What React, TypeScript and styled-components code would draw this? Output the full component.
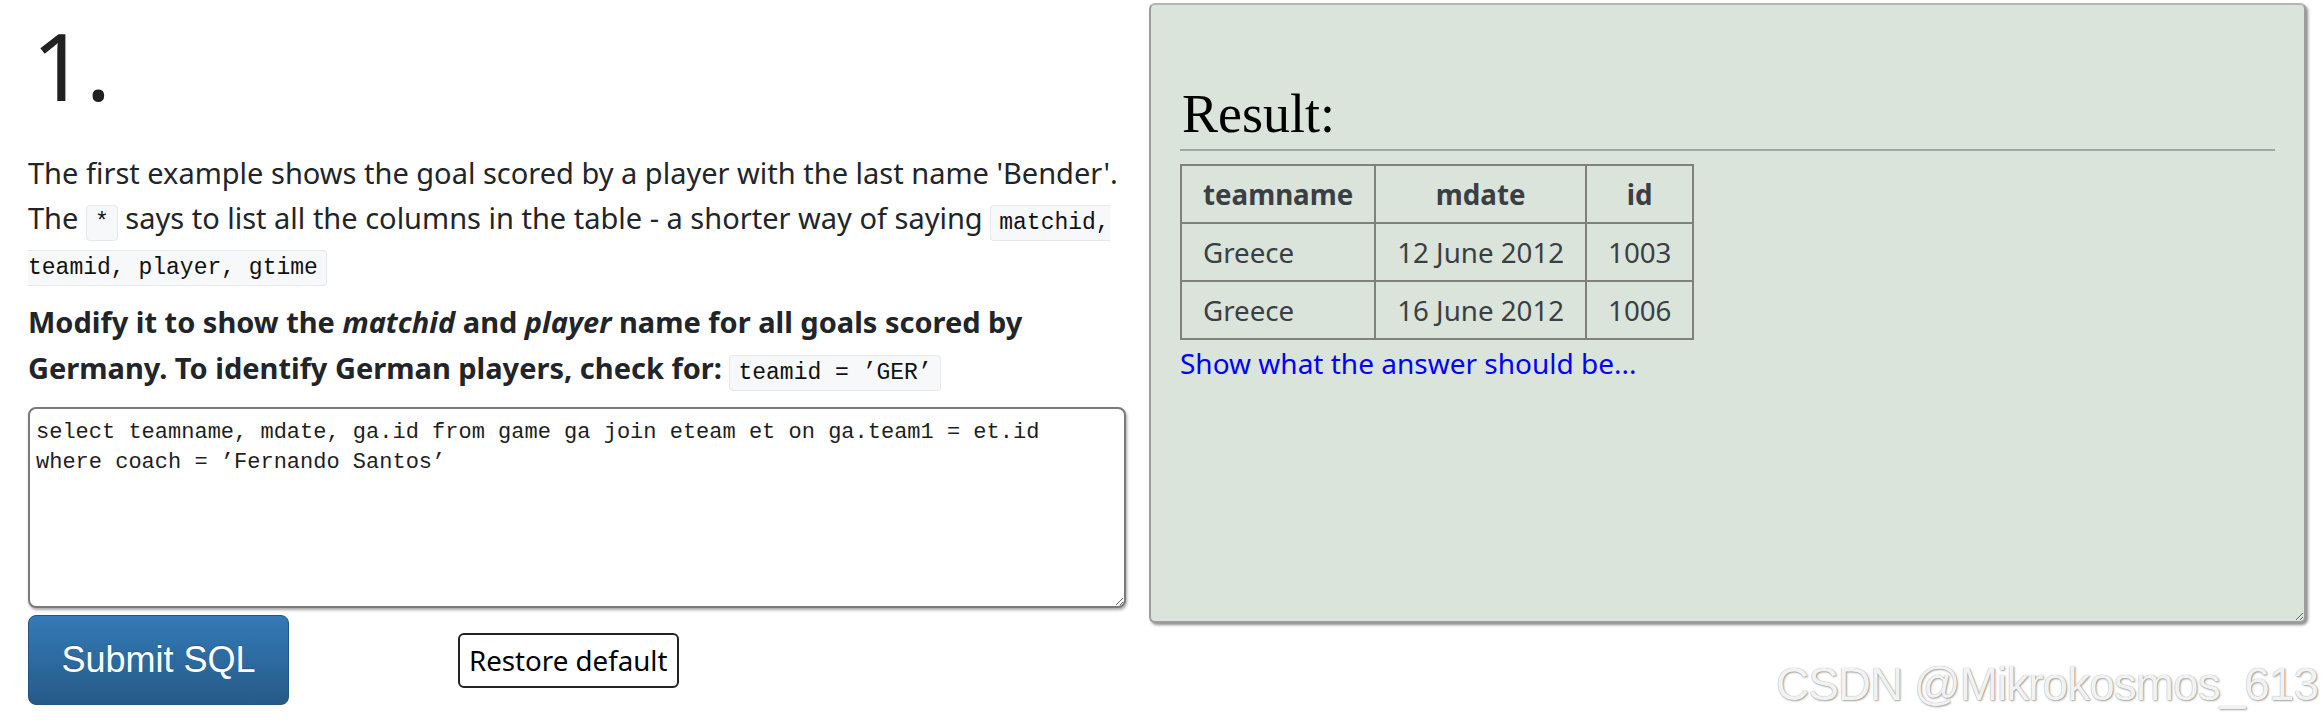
import React from 'react'
import styled, { createGlobalStyle } from 'styled-components'

const GlobalStyle = createGlobalStyle`
  html, body {
    margin: 0;
    padding: 0;
    background: #ffffff;
  }
  body {
    font-family: "Noto Sans", "Open Sans", sans-serif;
    color: #212529;
  }
`

const Frame = styled.div`
  position: relative;
  height: 722px;
  overflow: hidden;
`

const Columns = styled.div`
  display: flex;
  align-items: flex-start;
  gap: 23px;
  padding: 0 18px 0 28px;
`

const Exercise = styled.div`
  width: 1098px;
  flex: none;
`

const Number = styled.h1`
  margin: 18px 0 0 4px;
  font-size: 94px;
  font-weight: 400;
  line-height: 1;
  color: #212121;
`

const Prose = styled.p<{ $top: number }>`
  margin: ${(p) => p.$top}px 0 0;
  font-size: 29px;
  line-height: 45px;
  color: #212529;
`

const Task = styled(Prose)`
  line-height: 46px;
  font-weight: 700;
`

const Code = styled.code`
  font-family: "Liberation Mono", "Noto Sans CJK SC", monospace;
  font-size: 23px;
  line-height: 24px;
  font-weight: 400;
  color: #111;
  background: #f6f8fa;
  border: 1px solid #e6e9ec;
  border-radius: 4px;
  padding: 4px 8px;
`

const SqlBox = styled.textarea`
  display: block;
  box-sizing: border-box;
  width: 100%;
  height: 201px;
  margin: 16px 0 0;
  padding: 9px 6px;
  font-family: "Liberation Mono", "Noto Sans CJK SC", monospace;
  font-size: 22px;
  line-height: 30px;
  color: #1e1e1e;
  background: #fff;
  border: 2px solid #7a7a7a;
  border-radius: 8px;
  box-shadow: 1px 2px 3px rgba(0, 0, 0, 0.35);
  resize: both;
  outline: none;
`

const Actions = styled.div`
  display: flex;
  align-items: center;
  margin-top: 7px;
`

const SubmitButton = styled.button`
  width: 261px;
  height: 90px;
  font-family: "Liberation Sans", Arial, sans-serif;
  font-size: 36px;
  color: #fff;
  background: linear-gradient(to bottom, #337ab7 0%, #265a88 100%);
  border: 1px solid #245580;
  border-radius: 8px;
  text-shadow: 0 -1px 0 rgba(0, 0, 0, 0.2);
  cursor: pointer;
`

const RestoreButton = styled.button`
  margin-left: 169px;
  height: 55px;
  padding: 0 9px;
  font-family: "Noto Sans", sans-serif;
  font-size: 27.7px;
  color: #000;
  background: #fff;
  border: 2px solid #222;
  border-radius: 6px;
  cursor: pointer;
`

const ResultPanel = styled.div`
  box-sizing: border-box;
  width: 1157px;
  height: 620px;
  margin-top: 3px;
  padding: 77px 29px 0;
  background: #dae4da;
  border: 2px solid #9c9c9c;
  border-top-color: #b4b4b4;
  border-radius: 6px;
  box-shadow: 2px 2px 3px rgba(0, 0, 0, 0.45);
  resize: both;
  overflow: auto;
`

const ResultTitle = styled.h2`
  margin: 0;
  padding: 0 0 2px 2px;
  font-family: "Liberation Serif", "DejaVu Serif", serif;
  font-size: 54px;
  font-weight: 400;
  line-height: 1.2;
  color: #000;
  border-bottom: 2px solid #a2a6aa;
`

const ResultTable = styled.table`
  margin-top: 13px;
  border-collapse: collapse;
  border: 2px solid #808080;
  font-size: 27.7px;
  line-height: 34px;
  color: #3a3f45;
`

const HeadCell = styled.th`
  padding: 11px 21px;
  border: 2px solid #808080;
  font-weight: 700;
  text-align: center;
`

const Cell = styled.td<{ $align?: string }>`
  padding: 11px 21px;
  border: 2px solid #808080;
  text-align: ${(p) => p.$align || 'left'};
`

const AnswerRow = styled.div`
  margin-top: 5px;
  font-size: 28px;
  line-height: 36px;
`

const AnswerLink = styled.a`
  color: #0000ff;
  text-decoration: none;
  cursor: pointer;
`

const Watermark = styled.div`
  position: absolute;
  right: 6px;
  bottom: 15px;
  font-family: "Liberation Sans", Arial, sans-serif;
  font-size: 46px;
  line-height: 1;
  letter-spacing: -1px;
  color: #f2f2f2;
  text-shadow: 1px 1px 2px rgba(0, 0, 0, 0.35), 0 0 1px rgba(0, 0, 0, 0.35);
  pointer-events: none;
  white-space: nowrap;
`

const sql =
  'select teamname, mdate, ga.id from game ga join eteam et on ga.team1 = et.id\n' +
  'where coach = \u2019Fernando Santos\u2019'

export default function App() {
  const rows = [
    { team: 'Greece', date: '12 June 2012', id: '1003' },
    { team: 'Greece', date: '16 June 2012', id: '1006' },
  ]

  return (
    <Frame>
      <GlobalStyle />
      <Columns>
        <Exercise>
          <Number>1.</Number>
          <Prose $top={38}>
            The first example shows the goal scored by a player with the last name 'Bender'.
            The <Code>*</Code> says to list all the columns in the table - a shorter way of
            saying <Code>matchid, teamid, player, gtime</Code>
          </Prose>
          <Task $top={14}>
            Modify it to show the <i>matchid</i> and <i>player</i> name for all goals scored by
            Germany. To identify German players, check for: <Code>teamid = {'\u2019'}GER{'\u2019'}</Code>
          </Task>
          <SqlBox defaultValue={sql} spellCheck={false} />
          <Actions>
            <SubmitButton>Submit SQL</SubmitButton>
            <RestoreButton>Restore default</RestoreButton>
          </Actions>
        </Exercise>

        <ResultPanel>
          <ResultTitle>Result:</ResultTitle>
          <ResultTable>
            <thead>
              <tr>
                <HeadCell>teamname</HeadCell>
                <HeadCell>mdate</HeadCell>
                <HeadCell>id</HeadCell>
              </tr>
            </thead>
            <tbody>
              {rows.map((r, i) => (
                <tr key={'row' + i}>
                  <Cell>{r.team}</Cell>
                  <Cell $align="center">{r.date}</Cell>
                  <Cell $align="center">{r.id}</Cell>
                </tr>
              ))}
            </tbody>
          </ResultTable>
          <AnswerRow>
            <AnswerLink>Show what the answer should be...</AnswerLink>
          </AnswerRow>
        </ResultPanel>
      </Columns>
      <Watermark>CSDN @Mikrokosmos_613</Watermark>
    </Frame>
  )
}
